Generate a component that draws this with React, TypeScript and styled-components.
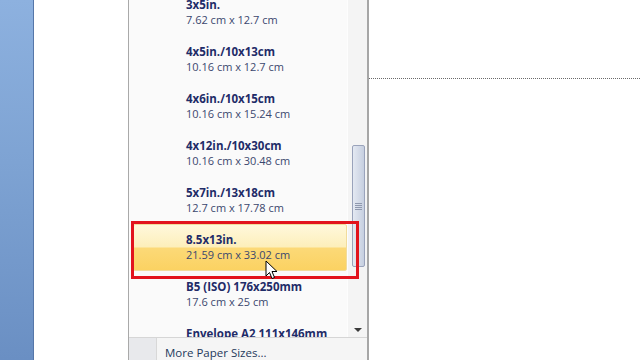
import styled, { createGlobalStyle } from "styled-components";

const GlobalStyle = createGlobalStyle`
  html, body {
    margin: 0;
    padding: 0;
    width: 640px;
    height: 360px;
    overflow: hidden;
    background: #ffffff;
    font-family: "Open Sans", "Noto Sans", sans-serif;
  }
`;

const Page = styled.div`
  position: relative;
  display: flex;
  width: 640px;
  height: 360px;
  overflow: hidden;
`;

const SideStrip = styled.div`
  width: 33px;
  flex: none;
  background: linear-gradient(180deg, #8db1df 0%, #7ea3d3 45%, #6a8fc3 100%);
  border-right: 1px solid #5677a9;
`;

const Gutter = styled.div`
  width: 94px;
  flex: none;
  background: #ffffff;
`;

const Menu = styled.div`
  width: 238px;
  flex: none;
  display: flex;
  flex-direction: column;
  background: #fafafa;
  border-left: 1px solid #a9a9a9;
  border-right: 2px solid #a6a6a6;
  box-shadow: 2px 0 2px rgba(0, 0, 0, 0.08);
`;

const ListArea = styled.div`
  height: 343px;
  display: flex;
  overflow: hidden;
`;

const Items = styled.div`
  width: 218px;
  display: flex;
  flex-direction: column;
  margin-top: -11px;
`;

const Item = styled.div<{ $active?: boolean }>`
  height: 47px;
  flex: none;
  box-sizing: border-box;
  margin-left: 4px;
  width: 214px;
  padding: 7px 0 0 52px;
  border: 1px solid ${(p) => (p.$active ? "#f1dc9c" : "transparent")};
  border-radius: 2px;
  background: ${(p) =>
    p.$active
      ? "linear-gradient(180deg, #fff8dc 0%, #fdefbb 48%, #fcd977 52%, #fbd262 100%)"
      : "transparent"};
`;

const Title = styled.div`
  font-size: 11.5px;
  line-height: 15px;
  font-weight: 700;
  color: #1f2c68;
  white-space: nowrap;
`;

const Sub = styled.div`
  font-size: 11px;
  line-height: 15px;
  color: #3a476e;
  white-space: nowrap;
`;

const ScrollBar = styled.div`
  width: 20px;
  flex: none;
  position: relative;
  background: #f4f4f4;
  border-left: 1px solid #fdfdfd;
  display: flex;
  flex-direction: column;
  align-items: center;
`;

const Thumb = styled.div`
  margin-top: 145px;
  width: 13px;
  height: 122px;
  box-sizing: border-box;
  border: 1px solid #9aa3bb;
  border-radius: 2px;
  background: linear-gradient(90deg, #e4e9f2 0%, #d2d9e7 60%, #c6cfe0 100%);
  display: flex;
  align-items: center;
  justify-content: center;
`;

const Grip = styled.div`
  width: 7px;
  height: 7px;
  background: repeating-linear-gradient(180deg, #8f98ae 0 1px, transparent 1px 2px);
`;

const DownArrow = styled.div`
  margin-top: auto;
  margin-bottom: 5px;
  width: 0;
  height: 0;
  border-left: 4px solid transparent;
  border-right: 4px solid transparent;
  border-top: 4px solid #3a3a3a;
`;

const Footer = styled.div`
  flex: 1;
  display: flex;
  border-top: 1px solid #d6d6d6;
  background: #f5f5f5;
`;

const IconColumn = styled.div`
  width: 27px;
  background: #e8e9ec;
  border-right: 1px solid #d8d8d8;
`;

const FooterLabel = styled.div`
  padding: 7px 0 0 8px;
  font-size: 11.5px;
  line-height: 15px;
  color: #1e395b;
  white-space: nowrap;
`;

const DocArea = styled.div`
  flex: 1;
  background: #ffffff;
  padding-top: 78px;
`;

const DottedRule = styled.div`
  height: 0;
  border-top: 1px dotted #6a6a6a;
`;

const Callout = styled.div`
  position: absolute;
  left: 131px;
  top: 221px;
  width: 228px;
  height: 58px;
  box-sizing: border-box;
  border: 3px solid #e2131d;
  pointer-events: none;
`;

const Cursor = styled.svg`
  position: absolute;
  left: 265px;
  top: 260px;
`;

type PaperSize = { title: string; sub?: string; active?: boolean };

const sizes: PaperSize[] = [
  { title: "3x5in.", sub: "7.62 cm x 12.7 cm" },
  { title: "4x5in./10x13cm", sub: "10.16 cm x 12.7 cm" },
  { title: "4x6in./10x15cm", sub: "10.16 cm x 15.24 cm" },
  { title: "4x12in./10x30cm", sub: "10.16 cm x 30.48 cm" },
  { title: "5x7in./13x18cm", sub: "12.7 cm x 17.78 cm" },
  { title: "8.5x13in.", sub: "21.59 cm x 33.02 cm", active: true },
  { title: "B5 (ISO) 176x250mm", sub: "17.6 cm x 25 cm" },
  // scrolled past the bottom edge, only the name shows
  { title: "Envelope A2 111x146mm" },
];

const App = (): JSX.Element => {
  return (
    <Page>
      <GlobalStyle />
      <SideStrip />
      <Gutter />
      <Menu>
        <ListArea>
          <Items>
            {sizes.map((size) => (
              <Item key={size.title} $active={size.active}>
                <Title>{size.title}</Title>
                {size.sub && <Sub>{size.sub}</Sub>}
              </Item>
            ))}
          </Items>
          <ScrollBar>
            <Thumb>
              <Grip />
            </Thumb>
            <DownArrow />
          </ScrollBar>
        </ListArea>
        <Footer>
          <IconColumn />
          <FooterLabel>More Paper Sizes...</FooterLabel>
        </Footer>
      </Menu>
      <DocArea>
        <DottedRule />
      </DocArea>
      <Callout />
      <Cursor width="13" height="20" viewBox="0 0 13 20">
        <path
          d="M1 1 L1 16 L4.5 12.5 L7 18.5 L9.5 17.5 L7 11.5 L12 11.5 Z"
          fill="#ffffff"
          stroke="#000000"
          strokeWidth="1"
          strokeLinejoin="round"
        />
      </Cursor>
    </Page>
  );
};

export default App;
